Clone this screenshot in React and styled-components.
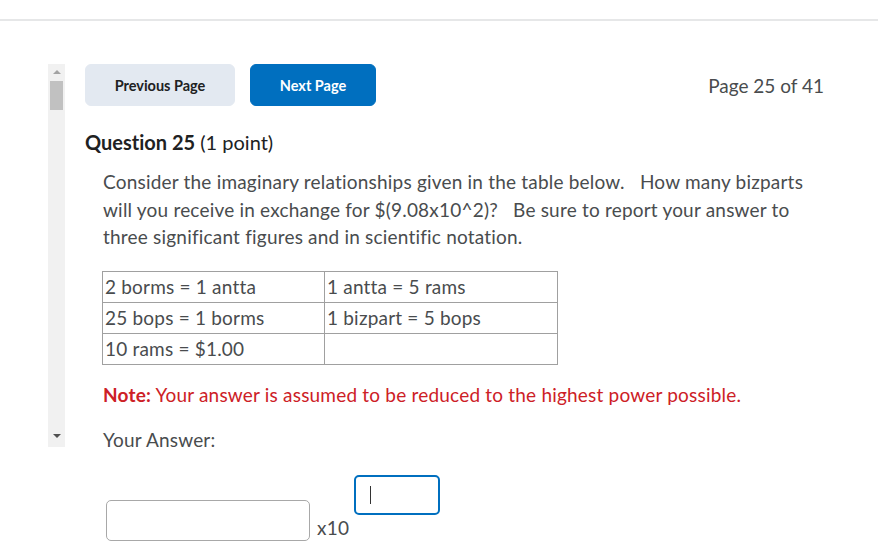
import React from "react";
import styled, { createGlobalStyle } from "styled-components";

const GlobalStyle = createGlobalStyle`
  body {
    margin: 0;
    background: #fff;
    font-family: Lato, "Noto Sans", sans-serif;
    font-variant-ligatures: none;
    color: #494c4e;
  }
`;

const TopBar = styled.div`
  height: 19px;
  border-bottom: 2px solid #e6e7e8;
`;

const Main = styled.div`
  display: flex;
  align-items: flex-start;
  padding: 43px 0 0 48px;
`;

const ScrollTrack = styled.div`
  width: 17px;
  height: 383px;
  background: #f1f1f1;
  display: flex;
  flex-direction: column;
  align-items: center;
  flex-shrink: 0;
`;

const Arrow = styled.div`
  width: 0;
  height: 0;
  border-left: 4px solid transparent;
  border-right: 4px solid transparent;
  ${(p) =>
    p.$down
      ? "border-top: 4px solid #505050; margin-top: auto; margin-bottom: 9px;"
      : "border-bottom: 4px solid #a3a3a3; margin-top: 6px;"}
`;

const Thumb = styled.div`
  width: 13px;
  height: 29px;
  margin-top: 7px;
  background: #c1c1c1;
`;

const Content = styled.div`
  margin-left: 20px;
  width: 739px;
`;

const Toolbar = styled.div`
  display: flex;
  align-items: center;
  gap: 15px;
  height: 42px;
`;

const NavButton = styled.button`
  height: 42px;
  width: ${(p) => p.$w}px;
  border-radius: 6px;
  border: 1px solid ${(p) => (p.$primary ? "#006fbf" : "#e3e9f1")};
  background: ${(p) => (p.$primary ? "#006fbf" : "#e3e9f1")};
  color: ${(p) => (p.$primary ? "#fff" : "#202122")};
  font-family: Lato, sans-serif;
  font-size: 14.5px;
  font-weight: 700;
  cursor: pointer;
`;

const PageInfo = styled.div`
  margin-left: auto;
  font-size: 19px;
  color: #494c4e;
`;

const Heading = styled.h2`
  margin: 24px 0 0;
  font-size: 20px;
  line-height: 24px;
  font-weight: 400;
  color: #202122;
  b {
    font-weight: 700;
  }
`;

const Body = styled.div`
  padding-left: 18px;
  font-size: 19px;
  line-height: 27.5px;
  letter-spacing: 0.2px;
  width: 710px;
`;

const Paragraph = styled.p`
  margin: ${(p) => p.$gap ?? 14}px 0 0;
  color: ${(p) => (p.$note ? "#cd2026" : "#494c4e")};
  b {
    font-weight: 700;
  }
`;

const Table = styled.table`
  margin-top: 20px;
  border-collapse: collapse;
  width: 456px;
  margin-left: -1px;
  td {
    border: 1px solid #a0a0a0;
    height: 30px;
    padding: 0 2px;
    font-size: 19px;
    color: #494c4e;
    vertical-align: middle;
  }
  td:first-child {
    width: 217px;
  }
`;

const AnswerRow = styled.div`
  display: flex;
  align-items: flex-end;
  margin: 21px 0 0 3px;
`;

const Input = styled.div`
  box-sizing: border-box;
  width: ${(p) => p.$w}px;
  height: ${(p) => p.$h}px;
  border-radius: 5px;
  border: ${(p) => (p.$focus ? "2px solid #006fbf" : "1px solid #a8a8a8")};
  margin-bottom: ${(p) => p.$raise || 0}px;
  display: flex;
  align-items: center;
  padding-left: 14px;
`;

const Caret = styled.div`
  width: 1px;
  height: 18px;
  background: #333;
`;

const Times = styled.span`
  font-size: 19px;
  line-height: 18px;
  margin: 0 5px 4px 7px;
  color: #494c4e;
`;

const rows = [
  ["2 borms = 1 antta", "1 antta = 5 rams"],
  ["25 bops = 1 borms", "1 bizpart = 5 bops"],
  ["10 rams = $1.00", ""],
];

export default function App() {
  return (
    <>
      <GlobalStyle />
      <TopBar />
      <Main>
        <ScrollTrack>
          <Arrow />
          <Thumb />
          <Arrow $down />
        </ScrollTrack>
        <Content>
          <Toolbar>
            <NavButton $w={150}>Previous Page</NavButton>
            <NavButton $w={126} $primary>
              Next Page
            </NavButton>
            <PageInfo>Page 25 of 41</PageInfo>
          </Toolbar>
          <Heading>
            <b>Question 25</b> (1 point)
          </Heading>
          <Body>
            <Paragraph>
              Consider the imaginary relationships given in the table below.
              &nbsp; How many bizparts will you receive in exchange for
              $(9.08x10^2)? &nbsp; Be sure to report your answer to three
              significant figures and in scientific notation.
            </Paragraph>
            <Table>
              <tbody>
                {rows.map((r, i) => (
                  <tr key={i}>
                    <td>{r[0]}</td>
                    <td>{r[1]}</td>
                  </tr>
                ))}
              </tbody>
            </Table>
            <Paragraph $note $gap={16}>
              <b>Note:</b> Your answer is assumed to be reduced to the highest
              power possible.
            </Paragraph>
            <Paragraph $gap={18}>Your Answer:</Paragraph>
            <AnswerRow>
              <Input $w={204} $h={41} />
              <Times>x10</Times>
              <Input $w={86} $h={40} $raise={26} $focus>
                <Caret />
              </Input>
            </AnswerRow>
          </Body>
        </Content>
      </Main>
    </>
  );
}
